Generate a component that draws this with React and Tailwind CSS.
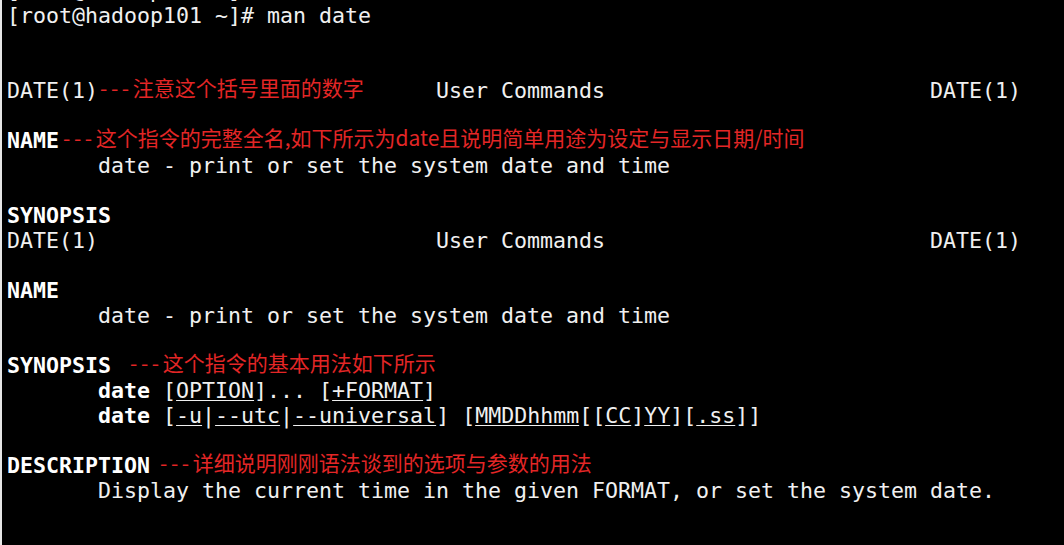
// App.jsx — terminal "man date" screenshot with red notes
const red = "font-['Noto_Sans_CJK_SC',sans-serif] text-[21px] leading-[0] text-[#e32626] align-[2px]"

function Row({ children }) {
  return <div className="h-[25px] whitespace-pre">{children}</div>
}

function Dashes() {
  return <span className="tracking-[3.6px]">---</span>
}

function U({ children }) {
  return <span className="underline underline-offset-[2px] decoration-1">{children}</span>
}

const header = (note) => (
  <Row>
    DATE(1)
    <span className={`${red} inline-block w-[338px] pl-[2px]`}>{note}</span>
    {'User Commands' + ' '.repeat(25) + 'DATE(1)'}
  </Row>
)

export default function App() {
  return (
    <div className="w-[1064px] h-[545px] overflow-hidden bg-black border-l-2 border-[#e6e6e6] pl-[5px] font-['DejaVu_Sans_Mono',monospace] text-[21.6px] leading-[25px] text-[#f0f0f0]">
      <div className="-mt-[22px]">
        <Row>[root@hadoop101 ~]# </Row>
        <Row>[root@hadoop101 ~]# man date</Row>
        <Row> </Row>
        <Row> </Row>
        {header(<><Dashes />注意这个括号里面的数字</>)}
        <Row> </Row>
        <Row>
          <b className="text-white">NAME</b>
          <span className={`${red} ml-[4px]`}>
            <Dashes />这个指令的完整全名,如下所示为date且说明简单用途为设定与显示日期/时间
          </span>
        </Row>
        <Row>{'       date - print or set the system date and time'}</Row>
        <Row> </Row>
        <Row><b className="text-white">SYNOPSIS</b></Row>
        {header(null)}
        <Row> </Row>
        <Row><b className="text-white">NAME</b></Row>
        <Row>{'       date - print or set the system date and time'}</Row>
        <Row> </Row>
        <Row>
          <b className="text-white">SYNOPSIS</b>
          <span className={`${red} ml-[19px]`}>
            <Dashes />这个指令的基本用法如下所示
          </span>
        </Row>
        <Row>
          {'       '}<b className="text-white">date</b> [<U>OPTION</U>]... [<U>+FORMAT</U>]
        </Row>
        <Row>
          {'       '}<b className="text-white">date</b> [<U>-u</U>|<U>--utc</U>|<U>--universal</U>] [<U>MMDDhhmm</U>[[<U>CC</U>]<U>YY</U>][<U>.ss</U>]]
        </Row>
        <Row> </Row>
        <Row>
          <b className="text-white">DESCRIPTION</b>
          <span className={`${red} ml-[10px]`}>
            <Dashes />详细说明刚刚语法谈到的选项与参数的用法
          </span>
        </Row>
        <Row>{'       Display the current time in the given FORMAT, or set the system date.'}</Row>
        <Row> </Row>
      </div>
    </div>
  )
}
